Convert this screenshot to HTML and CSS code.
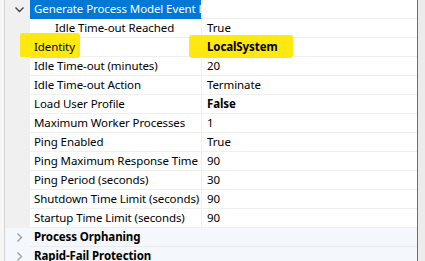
FILE: index.html
```html
<!DOCTYPE html>
<html>
<head>
<meta charset="utf-8">
<link rel="stylesheet" href="styles.css">
</head>
<body>
<div class="frame">
  <div class="edge"></div>
  <div class="grid">
    <div class="row header">
      <div class="gutter"><svg class="chev" width="9" height="6" viewBox="0 0 9 6"><path d="M0.5 0.5 L4.5 4.5 L8.5 0.5" fill="none" stroke="#444" stroke-width="1.4"/></svg></div>
      <div class="name sel">Generate Process Model Event Log Entry</div>
      <div class="value"></div>
    </div>
    <div class="row">
      <div class="gutter"></div>
      <div class="name sub">Idle Time-out Reached</div>
      <div class="value">True</div>
    </div>
    <div class="row marked">
      <div class="gutter"></div>
      <div class="name"><span class="mark mark-l">Identity</span></div>
      <div class="value"><span class="mark mark-r b">LocalSystem</span></div>
    </div>
    <div class="row"><div class="gutter"></div><div class="name">Idle Time-out (minutes)</div><div class="value">20</div></div>
    <div class="row"><div class="gutter"></div><div class="name">Idle Time-out Action</div><div class="value">Terminate</div></div>
    <div class="row"><div class="gutter"></div><div class="name">Load User Profile</div><div class="value b">False</div></div>
    <div class="row"><div class="gutter"></div><div class="name">Maximum Worker Processes</div><div class="value">1</div></div>
    <div class="row"><div class="gutter"></div><div class="name">Ping Enabled</div><div class="value">True</div></div>
    <div class="row"><div class="gutter"></div><div class="name">Ping Maximum Response Time (seconds)</div><div class="value">90</div></div>
    <div class="row"><div class="gutter"></div><div class="name">Ping Period (seconds)</div><div class="value">30</div></div>
    <div class="row"><div class="gutter"></div><div class="name">Shutdown Time Limit (seconds)</div><div class="value">90</div></div>
    <div class="row"><div class="gutter"></div><div class="name">Startup Time Limit (seconds)</div><div class="value">90</div></div>
    <div class="row cat">
      <div class="gutter"><svg class="chev" width="6" height="9" viewBox="0 0 6 9"><path d="M0.5 0.5 L4.5 4.5 L0.5 8.5" fill="none" stroke="#a0a0a0" stroke-width="1.4"/></svg></div>
      <div class="catname">Process Orphaning</div>
    </div>
    <div class="row cat">
      <div class="gutter"><svg class="chev" width="6" height="9" viewBox="0 0 6 9"><path d="M0.5 0.5 L4.5 4.5 L0.5 8.5" fill="none" stroke="#a0a0a0" stroke-width="1.4"/></svg></div>
      <div class="catname">Rapid-Fail Protection</div>
    </div>
  </div>
  <div class="scroll"></div>
</div>
</body>
</html>
```

FILE: styles.css
```css
html, body {
  margin: 0;
  padding: 0;
  background: #ffffff;
}
.frame {
  width: 425px;
  height: 261px;
  overflow: hidden;
  display: flex;
  font-family: "Noto Sans", "Open Sans", sans-serif;
  font-size: 11.5px;
  letter-spacing: -0.1px;
  color: #000;
}
.edge {
  width: 4px;
  flex: none;
  background: #f7f7f7;
  border-right: 1px solid #d4d4d4;
}
.grid {
  width: 412px;
  flex: none;
  display: flex;
  flex-direction: column;
  background: #fff;
}
.scroll {
  flex: none;
  width: 7px;
  border-left: 1px solid #6e6e6e;
  background: #ececec;
}
.row {
  display: grid;
  grid-template-columns: 25px 172px 1fr;
  height: 19px;
  flex: none;
  position: relative;
}
.gutter {
  background: #f0f0f0;
  display: flex;
  align-items: center;
  justify-content: center;
}
.name, .value {
  border-bottom: 1px solid #f0f0f0;
  line-height: 18px;
  white-space: nowrap;
  overflow: hidden;
  padding-left: 4px;
  position: relative;
  z-index: 0;
}
.name {
  border-right: 1px solid #f0f0f0;
}
.value {
  padding-left: 5px;
}
.sub {
  padding-left: 25px;
}
.sel {
  background: #0078d7;
  color: #fff;
  border-bottom-color: #0078d7;
}
.b {
  font-weight: bold;
}
.header .gutter .chev {
  margin-left: 4px;
}
.cat {
  grid-template-columns: 25px 1fr;
  background: #f4f7fb;
}
.cat .gutter {
  background: #f4f7fb;
}
.cat .chev {
  margin-left: 4px;
}
.catname {
  font-weight: bold;
  line-height: 18px;
  padding-left: 4px;
  border-bottom: 1px solid #e8ecf2;
  white-space: nowrap;
}
.marked .name, .marked .value {
  overflow: visible;
}
.mark {
  position: relative;
  display: inline-block;
}
.mark::before {
  content: "";
  position: absolute;
  z-index: -1;
  background: #fde910;
  border-radius: 3px;
}
.mark-l::before {
  left: -14px;
  right: -5px;
  top: -5px;
  bottom: -2px;
}
.mark-r::before {
  left: -18px;
  right: -15px;
  top: -3px;
  bottom: -2px;
}
```
